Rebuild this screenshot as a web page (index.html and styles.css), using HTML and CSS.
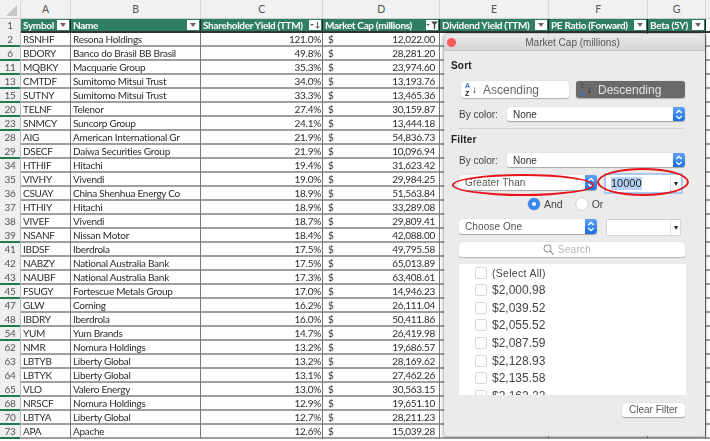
FILE: index.html
```html
<!DOCTYPE html>
<html lang="en">
<head>
<meta charset="utf-8">
<title>Market Cap filter</title>
<link rel="stylesheet" href="styles.css">
</head>
<body>
<svg class="defs" width="0" height="0" aria-hidden="true"><defs>
<symbol id="stepper" viewBox="0 0 12 16"><path d="M3.2 6.4 6 3.6l2.8 2.8M3.2 9.6 6 12.4l2.8-2.8" fill="none" stroke="#fff" stroke-width="1.5"/></symbol>
</defs></svg>
<main class="sheet">
  <div class="row letters"><div class="corner"></div><div>A</div><div>B</div><div>C</div><div>D</div><div>E</div><div>F</div><div>G</div></div>
  <div class="row titles">
    <div class="rh">1</div>
    <div class="th"><span>Symbol</span><i class="fb"><b class="tri"></b></i></div>
    <div class="th"><span>Name</span><i class="fb"><b class="tri"></b></i></div>
    <div class="th"><span>Shareholder Yield (TTM)</span><i class="fb"><b class="tri small"></b><svg class="sortarrow" width="5" height="9" viewBox="0 0 5 9"><path d="M2.5 1v6M.8 5.2l1.7 2.2 1.7-2.2" fill="none" stroke="#444" stroke-width=".9"/></svg></i></div>
    <div class="th"><span>Market Cap (millions)</span><i class="fb"><b class="tri small"></b><svg class="funnel" width="7" height="8" viewBox="0 0 7 8"><path d="M0 .5h7L4.2 3.6V8H2.8V3.6z" fill="#444"/></svg></i></div>
    <div class="th"><span>Dividend Yield (TTM)</span><i class="fb"><b class="tri"></b></i></div>
    <div class="th"><span>PE Ratio (Forward)</span><i class="fb"><b class="tri"></b></i></div>
    <div class="th"><span>Beta (5Y)</span><i class="fb"><b class="tri"></b></i></div>
  </div>
  <div class="row"><div class="rh gap">2</div><div>RSNHF</div><div>Resona Holdings</div><div class="pct">121.0%</div><div class="usd"><span>$</span><span>12,022.00</span></div><div></div><div></div><div></div></div>
  <div class="row"><div class="rh gap">6</div><div>BDORY</div><div>Banco do Brasil BB Brasil</div><div class="pct">49.8%</div><div class="usd"><span>$</span><span>28,281.20</span></div><div></div><div></div><div></div></div>
  <div class="row"><div class="rh gap">11</div><div>MQBKY</div><div>Macquarie Group</div><div class="pct">35.3%</div><div class="usd"><span>$</span><span>23,974.60</span></div><div></div><div></div><div></div></div>
  <div class="row"><div class="rh gap">13</div><div>CMTDF</div><div>Sumitomo Mitsui Trust</div><div class="pct">34.0%</div><div class="usd"><span>$</span><span>13,193.76</span></div><div></div><div></div><div></div></div>
  <div class="row"><div class="rh gap">15</div><div>SUTNY</div><div>Sumitomo Mitsui Trust</div><div class="pct">33.3%</div><div class="usd"><span>$</span><span>13,465.36</span></div><div></div><div></div><div></div></div>
  <div class="row"><div class="rh gap">20</div><div>TELNF</div><div>Telenor</div><div class="pct">27.4%</div><div class="usd"><span>$</span><span>30,159.87</span></div><div></div><div></div><div></div></div>
  <div class="row"><div class="rh gap">23</div><div>SNMCY</div><div>Suncorp Group</div><div class="pct">24.1%</div><div class="usd"><span>$</span><span>13,444.18</span></div><div></div><div></div><div></div></div>
  <div class="row"><div class="rh">28</div><div>AIG</div><div>American International Gr</div><div class="pct">21.9%</div><div class="usd"><span>$</span><span>54,836.73</span></div><div></div><div></div><div></div></div>
  <div class="row"><div class="rh gap">29</div><div>DSECF</div><div>Daiwa Securities Group</div><div class="pct">21.9%</div><div class="usd"><span>$</span><span>10,096.94</span></div><div></div><div></div><div></div></div>
  <div class="row"><div class="rh">34</div><div>HTHIF</div><div>Hitachi</div><div class="pct">19.4%</div><div class="usd"><span>$</span><span>31,623.42</span></div><div></div><div></div><div></div></div>
  <div class="row"><div class="rh">35</div><div>VIVHY</div><div>Vivendi</div><div class="pct">19.0%</div><div class="usd"><span>$</span><span>29,984.25</span></div><div></div><div></div><div></div></div>
  <div class="row"><div class="rh">36</div><div>CSUAY</div><div>China Shenhua Energy Co</div><div class="pct">18.9%</div><div class="usd"><span>$</span><span>51,563.84</span></div><div></div><div></div><div></div></div>
  <div class="row"><div class="rh">37</div><div>HTHIY</div><div>Hitachi</div><div class="pct">18.9%</div><div class="usd"><span>$</span><span>33,289.08</span></div><div></div><div></div><div></div></div>
  <div class="row"><div class="rh">38</div><div>VIVEF</div><div>Vivendi</div><div class="pct">18.7%</div><div class="usd"><span>$</span><span>29,809.41</span></div><div></div><div></div><div></div></div>
  <div class="row"><div class="rh gap">39</div><div>NSANF</div><div>Nissan Motor</div><div class="pct">18.4%</div><div class="usd"><span>$</span><span>42,088.00</span></div><div></div><div></div><div></div></div>
  <div class="row"><div class="rh">41</div><div>IBDSF</div><div>Iberdrola</div><div class="pct">17.5%</div><div class="usd"><span>$</span><span>49,795.58</span></div><div></div><div></div><div></div></div>
  <div class="row"><div class="rh">42</div><div>NABZY</div><div>National Australia Bank</div><div class="pct">17.5%</div><div class="usd"><span>$</span><span>65,013.89</span></div><div></div><div></div><div></div></div>
  <div class="row"><div class="rh gap">43</div><div>NAUBF</div><div>National Australia Bank</div><div class="pct">17.3%</div><div class="usd"><span>$</span><span>63,408.61</span></div><div></div><div></div><div></div></div>
  <div class="row"><div class="rh gap">45</div><div>FSUGY</div><div>Fortescue Metals Group</div><div class="pct">17.0%</div><div class="usd"><span>$</span><span>14,946.23</span></div><div></div><div></div><div></div></div>
  <div class="row"><div class="rh">47</div><div>GLW</div><div>Corning</div><div class="pct">16.2%</div><div class="usd"><span>$</span><span>26,111.04</span></div><div></div><div></div><div></div></div>
  <div class="row"><div class="rh gap">48</div><div>IBDRY</div><div>Iberdrola</div><div class="pct">16.0%</div><div class="usd"><span>$</span><span>50,411.86</span></div><div></div><div></div><div></div></div>
  <div class="row"><div class="rh gap">54</div><div>YUM</div><div>Yum Brands</div><div class="pct">14.7%</div><div class="usd"><span>$</span><span>26,419.98</span></div><div></div><div></div><div></div></div>
  <div class="row"><div class="rh">62</div><div>NMR</div><div>Nomura Holdings</div><div class="pct">13.2%</div><div class="usd"><span>$</span><span>19,686.57</span></div><div></div><div></div><div></div></div>
  <div class="row"><div class="rh">63</div><div>LBTYB</div><div>Liberty Global</div><div class="pct">13.2%</div><div class="usd"><span>$</span><span>28,169.62</span></div><div></div><div></div><div></div></div>
  <div class="row"><div class="rh">64</div><div>LBTYK</div><div>Liberty Global</div><div class="pct">13.1%</div><div class="usd"><span>$</span><span>27,462.26</span></div><div></div><div></div><div></div></div>
  <div class="row"><div class="rh gap">65</div><div>VLO</div><div>Valero Energy</div><div class="pct">13.0%</div><div class="usd"><span>$</span><span>30,563.15</span></div><div></div><div></div><div></div></div>
  <div class="row"><div class="rh gap">68</div><div>NRSCF</div><div>Nomura Holdings</div><div class="pct">12.9%</div><div class="usd"><span>$</span><span>19,651.10</span></div><div></div><div></div><div></div></div>
  <div class="row"><div class="rh gap">70</div><div>LBTYA</div><div>Liberty Global</div><div class="pct">12.7%</div><div class="usd"><span>$</span><span>28,211.23</span></div><div></div><div></div><div></div></div>
  <div class="row"><div class="rh gap">73</div><div>APA</div><div>Apache</div><div class="pct">12.6%</div><div class="usd"><span>$</span><span>15,039.28</span></div><div></div><div></div><div></div></div>
</main>

<section class="dialog">
  <header class="titlebar"><span class="close"></span><span>Market Cap (millions)</span></header>
  <div class="body">
    <h2 class="heading">Sort</h2>
    <div class="sortbtns">
      <div class="btn"><span class="az"><b class="blue">A</b><b>Z</b></span><span class="down">↓</span><span>Ascending</span></div>
      <div class="btn on"><span class="az"><b>Z</b><b class="blue">A</b></span><span class="down">↓</span><span>Descending</span></div>
    </div>
    <div class="colorrow first"><span class="lbl">By color:</span><div class="select"><span>None</span><span class="step"><svg width="12" height="15"><use href="#stepper"/></svg></span></div></div>
    <hr class="sep">
    <h2 class="heading filter">Filter</h2>
    <div class="colorrow second"><span class="lbl">By color:</span><div class="select"><span>None</span><span class="step"><svg width="12" height="15"><use href="#stepper"/></svg></span></div></div>
    <div class="critrow one">
      <div class="select grow tall"><span>Greater Than</span><span class="step"><svg width="12" height="15"><use href="#stepper"/></svg></span></div>
      <div class="combo focus"><span class="selected">10000</span><span class="caret">▾</span></div>
    </div>
    <div class="radios">
      <span class="radio on"></span><span class="rlbl">And</span>
      <span class="radio"></span><span class="rlbl">Or</span>
    </div>
    <div class="critrow two">
      <div class="select grow tall"><span>Choose One</span><span class="step"><svg width="12" height="15"><use href="#stepper"/></svg></span></div>
      <div class="combo"><span></span><span class="caret">▾</span></div>
    </div>
    <div class="search"><svg width="11" height="11" viewBox="0 0 11 11"><circle cx="4.5" cy="4.5" r="3.6" fill="none" stroke="#8a8a8a" stroke-width="1"/><path d="M7.2 7.2 10.5 10.5" stroke="#8a8a8a" stroke-width="1.1"/></svg><span>Search</span></div>
    <ul class="list">
      <li><i class="check"></i><span class="all">(Select All)</span></li>
      <li><i class="check"></i><span>$2,000.98</span></li>
      <li><i class="check"></i><span>$2,039.52</span></li>
      <li><i class="check"></i><span>$2,055.52</span></li>
      <li><i class="check"></i><span>$2,087.59</span></li>
      <li><i class="check"></i><span>$2,128.93</span></li>
      <li><i class="check"></i><span>$2,135.58</span></li>
      <li><i class="check"></i><span>$2,162.22</span></li>
    </ul>
    <div class="foot"><div class="clear">Clear Filter</div></div>
  </div>
  <div class="ring ring-a"></div>
  <div class="ring ring-b"></div>
</section>
</body>
</html>
```
FILE: styles.css
```css
*, *::before, *::after { box-sizing: border-box; }
html, body { margin: 0; padding: 0; }
body {
  width: 710px;
  height: 441px;
  overflow: hidden;
  position: relative;
  background: #fff;
  font-family: Lato, "Liberation Sans", sans-serif;
  font-size: 10px;
  color: #2c2c2c;
}
.defs { position: absolute; }
.sheet { filter: blur(0.3px); letter-spacing: -.27px; }
.row {
  display: grid;
  grid-template-columns: 21px 50px 130px 122px 117px 109px 99px 58px 4px;
  height: 14px;
  line-height: 12px;
  border-bottom: 2px solid #9f9f9f;
}
.row > div {
  padding-left: 2px;
  border-right: 1px solid #777;
  white-space: nowrap;
  overflow: hidden;
}
.row > div.pct { text-align: right; padding-right: 1px; }
.row > div.usd { display: flex; justify-content: space-between; padding: 0 4px 0 5px; }
.row > div.rh {
  padding: 0;
  text-align: center;
  color: #555;
  background: #efefef;
  border-right: 1px solid #bdbdbd;
  height: 14px;
}
.row > div.rh.gap { box-shadow: inset 0 -2px 0 #1f7a4d; height: 14px; }
.row.letters {
  height: 19px;
  line-height: 18px;
  background: #f1f1f1;
  border-bottom: 1px solid #cfcfcf;
  color: #555;
  font-size: 10.5px;
}
.row.letters > div { text-align: center; border-right: 1px solid #d8d8d8; padding: 0; }
.corner { position: relative; }
.corner::after {
  content: "";
  position: absolute;
  right: 3px;
  bottom: 2px;
  border-style: solid;
  border-width: 0 0 11px 11px;
  border-color: transparent transparent #c8c8c8 transparent;
}
.row.titles {
  height: 14px;
  border-bottom: 2px solid #333;
  font-weight: 700;
  color: #fff;
  letter-spacing: -.33px;
}
.row.titles > .rh { font-weight: 400; color: #555; line-height: 12px; }
.row.titles > .th {
  display: flex;
  justify-content: space-between;
  background: #2f7d62;
  border-right: 1px solid #222;
  padding: 0 1px 0 2px;
  height: 12px;
}
.fb {
  width: 12px;
  height: 10px;
  margin-top: 1px;
  background: #fff;
  display: flex;
  align-items: center;
  justify-content: center;
  gap: 1px;
  flex: none;
}
.tri { display: block; width: 0; height: 0; border-style: solid; border-width: 4px 3.5px 0; border-color: #666 transparent transparent; }
.tri.small { border-width: 2px 2px 0; }

.dialog {
  position: absolute;
  left: 444px;
  top: 34px;
  width: 261px;
  height: 402px;
  background: #ebebeb;
  border-radius: 5px 5px 2px 2px;
  box-shadow: 0 0 3px 1px rgba(0, 0, 0, .35);
  font-family: "Liberation Sans", sans-serif;
  font-size: 10px;
  color: #333;
  filter: blur(0.25px);
}
.titlebar {
  height: 17px;
  display: flex;
  align-items: center;
  justify-content: center;
  padding-right: 4px;
  background: linear-gradient(#ebe9eb, #d6d4d6);
  border-radius: 5px 5px 0 0;
  border-bottom: 1px solid #c4c4c4;
  color: #555;
  position: relative;
}
.close {
  position: absolute;
  left: 3px;
  top: 4px;
  width: 9px;
  height: 9px;
  border-radius: 50%;
  background: #f9595a;
}
.body { padding: 0 20px 0 15px; }
.heading {
  margin: 9px 0 0 -8px;
  font-size: 10px;
  line-height: 12px;
  font-weight: 700;
  color: #222;
  letter-spacing: .2px;
}
.heading.filter { margin-top: 5px; }
.sortbtns { display: flex; justify-content: space-between; margin: 9px 0 0 2px; }
.btn {
  width: 108px;
  height: 17px;
  background: #fff;
  border-radius: 3px;
  box-shadow: 0 .5px 1px rgba(0, 0, 0, .25);
  display: flex;
  align-items: center;
  padding-left: 4px;
  font-size: 12px;
  color: #666;
}
.btn.on { background: #6a6a6a; color: #e4e4e4; width: 109px; }
.az { display: flex; flex-direction: column; font-size: 7px; line-height: 8px; width: 6px; color: #222; }
.az b { font-weight: 700; }
.az .blue { color: #3a78d0; }
.btn.on .az { color: #555; }
.down { font-size: 10px; color: #222; width: 11px; margin-left: 1px; font-weight: 700; }
.btn.on .down { color: #111; }
.colorrow { display: flex; align-items: center; gap: 8px; height: 14px; }
.colorrow.first { margin-top: 9px; }
.colorrow.second { margin-top: 7px; }
.colorrow .select { margin-left: auto; width: 178px; }
.lbl { white-space: nowrap; color: #444; }
.select {
  display: flex;
  align-items: center;
  justify-content: space-between;
  height: 14px;
  background: #fff;
  border-radius: 3px;
  box-shadow: 0 .5px 1px rgba(0, 0, 0, .3);
  padding-left: 6px;
  overflow: hidden;
}
.select.tall { height: 15px; padding-left: 6px; letter-spacing: .1px; color: #555; }
.step {
  width: 12px;
  align-self: stretch;
  background: linear-gradient(#5ea2f5, #1c6fe0);
  display: flex;
  align-items: center;
  justify-content: center;
}
.sep { border: 0; border-top: 1px solid #d6d6d6; margin: 7px 0 0 -1px; height: 0; }
.critrow { display: flex; align-items: flex-start; }
.critrow .grow { width: 138px; flex: none; }
.critrow.one { margin-top: 8px; }
.critrow.two { margin-top: 8px; }
.combo {
  margin-left: 9px;
  width: 75px;
  height: 17px;
  background: #fff;
  display: flex;
  justify-content: space-between;
  align-items: center;
  font-size: 11px;
  box-shadow: inset 0 0 0 1px #d5d5d5;
}
.combo.focus { box-shadow: 0 0 0 2px #a8c9f2; padding-left: 5px; }
.selected { background: #b4d3f7; color: #222; line-height: 13px; }
.caret { width: 11px; font-size: 8px; color: #222; text-align: center; border-left: 1px solid #ddd; line-height: 14px; }
.radios { display: flex; align-items: center; height: 14px; margin-top: 5px; padding-left: 69px; font-size: 10.5px; }
.radio {
  width: 12px;
  height: 12px;
  border-radius: 50%;
  background: #fff;
  box-shadow: 0 0 0 .5px #bbb;
  position: relative;
}
.radio.on { background: #3a86ee; }
.radio.on::after {
  content: "";
  position: absolute;
  left: 4px;
  top: 4px;
  width: 4px;
  height: 4px;
  border-radius: 50%;
  background: #fff;
}
.rlbl { margin-left: 4px; margin-right: 13px; color: #444; }
.search {
  margin-top: 6px;
  height: 15px;
  padding-right: 10px;
  background: #fff;
  border-radius: 3px;
  box-shadow: 0 .5px 1px rgba(0, 0, 0, .25);
  display: flex;
  align-items: center;
  justify-content: center;
  gap: 4px;
  color: #b5b5b5;
  letter-spacing: .3px;
  width: 226px;
}
.list {
  list-style: none;
  margin: 7px 0 0;
  padding: 0;
  width: 227px;
  height: 131px;
  overflow: hidden;
  background: #fff;
}
.list li {
  height: 17.55px;
  display: flex;
  align-items: center;
  padding-left: 16px;
  gap: 5px;
  font-size: 12px;
  color: #444;
}
.list .all { font-size: 10.5px; letter-spacing: .3px; }
.check {
  width: 12px;
  height: 12px;
  background: #fff;
  border: 1px solid #d8d8d8;
  border-radius: 2px;
  flex: none;
}
.foot { display: flex; justify-content: flex-end; margin-top: 8px; width: 226px; }
.clear {
  width: 63px;
  height: 14px;
  line-height: 14px;
  text-align: center;
  background: #fff;
  border-radius: 3px;
  box-shadow: 0 .5px 1px rgba(0, 0, 0, .3);
  color: #555;
}
.ring {
  position: absolute;
  border: 2px solid #e8141c;
  border-radius: 50%;
}
.ring-a { left: 8px; top: 140px; width: 142px; height: 22px; }
.ring-b { left: 153px; top: 134px; width: 92px; height: 28px; }
```
